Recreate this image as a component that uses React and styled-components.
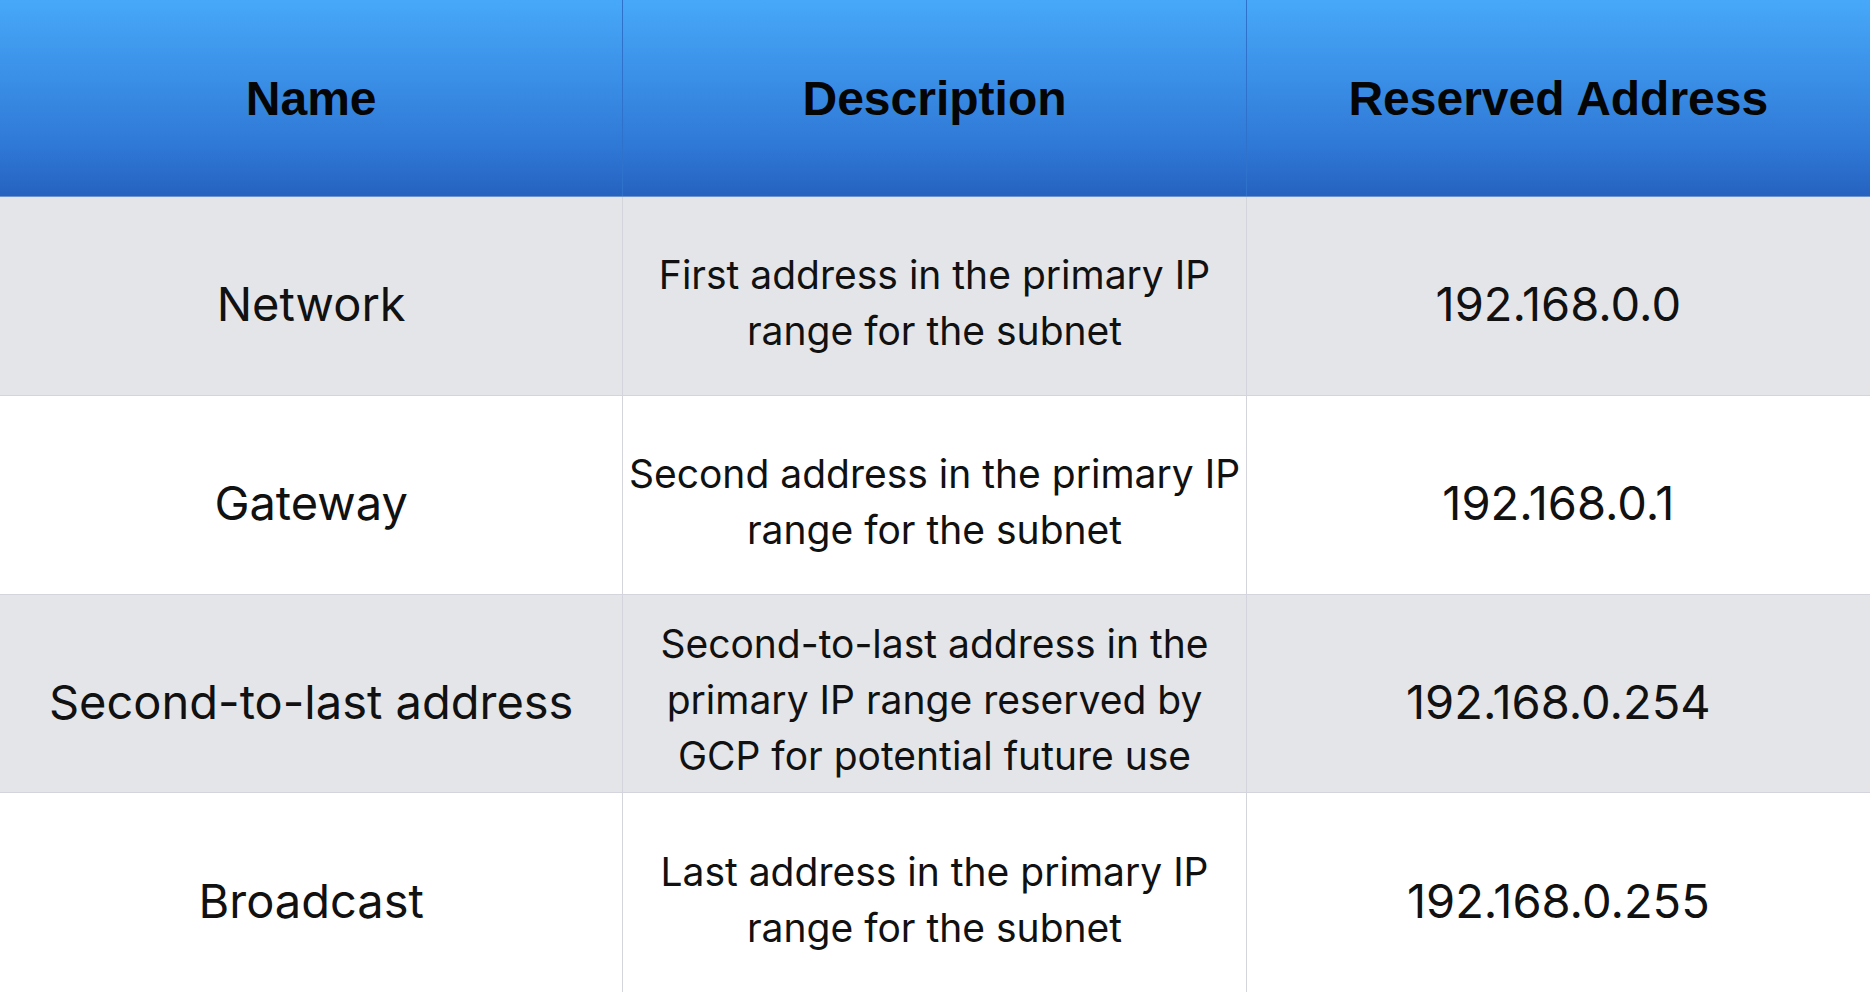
import React from 'react';
import styled, { createGlobalStyle } from 'styled-components';

const GlobalStyle = createGlobalStyle`
  html, body {
    margin: 0;
    padding: 0;
    background: #ffffff;
  }
  body {
    font-family: Inter, "Noto Sans", sans-serif;
    color: #111;
  }
`;

const headers = ['Name', 'Description', 'Reserved Address'];

// description text keeps the line breaks of the slide
const rows = [
  {
    name: 'Network',
    desc: ['First address in the primary IP', 'range for the subnet'],
    address: '192.168.0.0',
  },
  {
    name: 'Gateway',
    desc: ['Second address in the primary IP', 'range for the subnet'],
    address: '192.168.0.1',
  },
  {
    name: 'Second-to-last address',
    desc: ['Second-to-last address in the', 'primary IP range reserved by', 'GCP for potential future use'],
    address: '192.168.0.254',
  },
  {
    name: 'Broadcast',
    desc: ['Last address in the primary IP', 'range for the subnet'],
    address: '192.168.0.255',
  },
];

const App = () => {
  return (
    <>
      <GlobalStyle />
      <Table>
        <HeaderRow>
          {headers.map((h, i) => (
            <Th key={h} last={i === headers.length - 1}>{h}</Th>
          ))}
        </HeaderRow>
        {rows.map((row, r) => (
          <Row key={row.name} gray={r % 2 === 0} last={r === rows.length - 1}>
            <Td>{row.name}</Td>
            <Desc>
              {row.desc.map((line) => (
                <span key={line}>{line}</span>
              ))}
            </Desc>
            <Td last>{row.address}</Td>
          </Row>
        ))}
      </Table>
    </>
  );
};

export default App;

const Table = styled.div`
  display: grid;
  grid-template-rows: 197px repeat(4, 1fr);
  width: 1870px;
  height: 992px;
`;

const HeaderRow = styled.div`
  display: grid;
  grid-template-columns: repeat(3, 1fr);
  background: linear-gradient(to bottom, #47a8f9 0%, #3a8fe6 40%, #2f78d6 75%, #2662bf 100%);
  border-bottom: 1px solid #6d93cf;
`;

const Th = styled.div.withConfig({
  shouldForwardProp: (prop) => prop !== 'last',
})`
  display: flex;
  align-items: center;
  justify-content: center;
  font-family: "Liberation Sans", Arial, sans-serif;
  font-weight: bold;
  font-size: 48px;
  color: #050505;
  border-right: ${({ last }) => (last ? 'none' : '1px solid #2f72cc')};
`;

const Row = styled.div.withConfig({
  shouldForwardProp: (prop) => prop !== 'gray' && prop !== 'last',
})`
  display: grid;
  grid-template-columns: repeat(3, 1fr);
  background-color: ${({ gray }) => (gray ? '#e4e5e8' : '#ffffff')};
  border-bottom: ${({ last }) => (last ? 'none' : '1px solid #d4d4dc')};
`;

const Td = styled.div.withConfig({
  shouldForwardProp: (prop) => prop !== 'last',
})`
  display: flex;
  align-items: center;
  justify-content: center;
  padding-top: 16px;
  font-size: 47px;
  color: #111;
  border-right: ${({ last }) => (last ? 'none' : '1px solid #d4d4dc')};
`;

const Desc = styled.div`
  display: flex;
  flex-direction: column;
  align-items: center;
  justify-content: center;
  padding-top: 14px;
  font-size: 39px;
  line-height: 56px;
  color: #111;
  text-align: center;
  white-space: nowrap;
  border-right: 1px solid #d4d4dc;
`;
